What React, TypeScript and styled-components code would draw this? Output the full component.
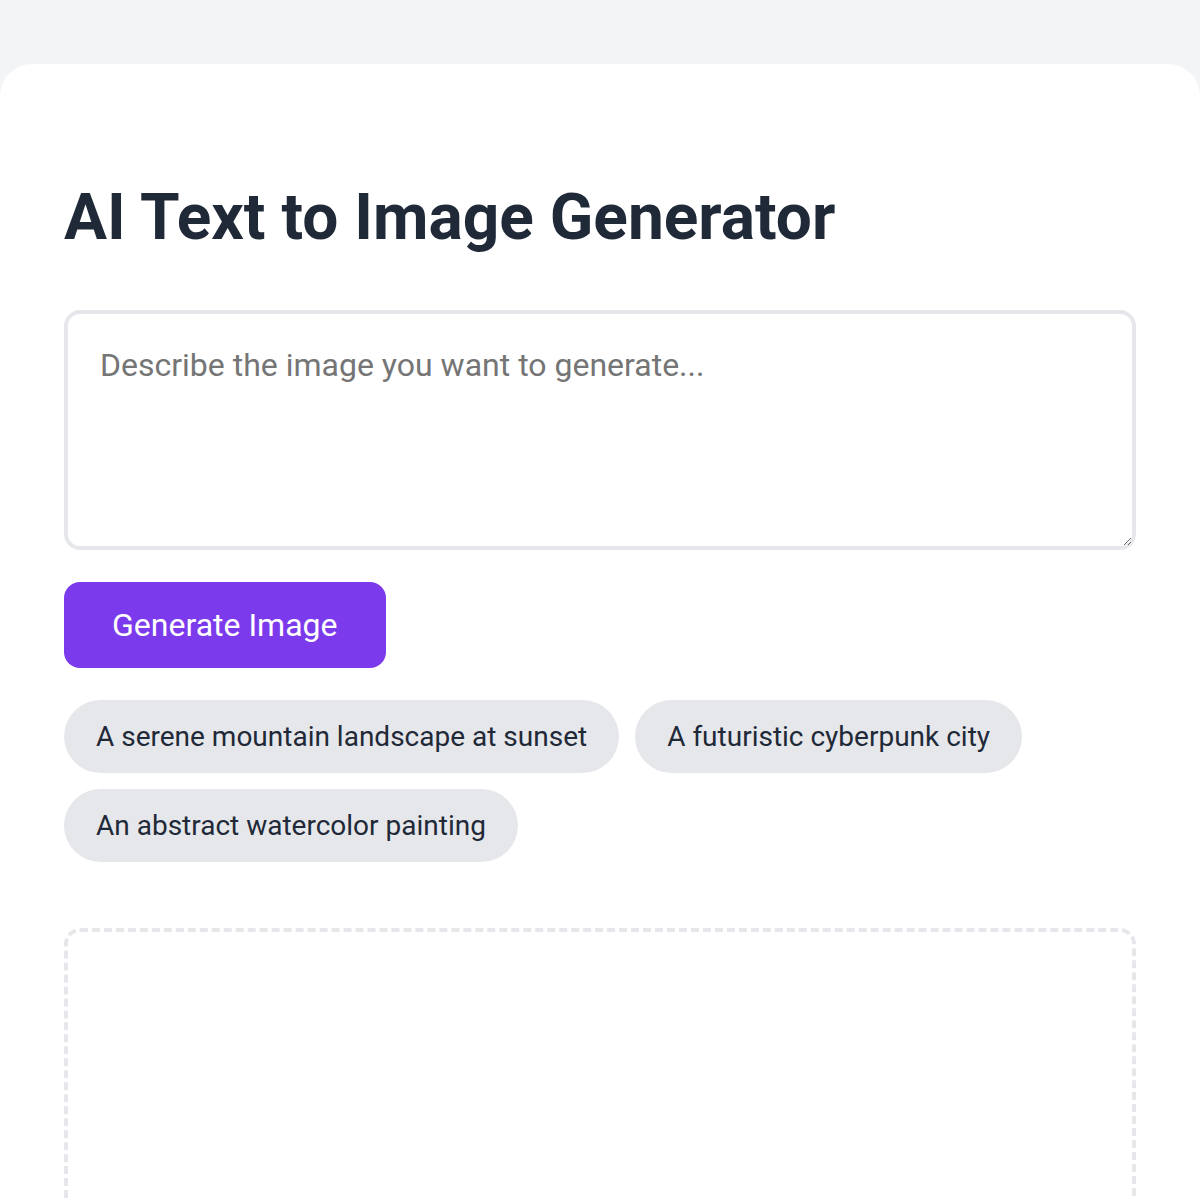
import styled, { createGlobalStyle } from "styled-components"

const GlobalStyle = createGlobalStyle`
    html, body {
        margin: 0;
        padding: 0;
        background: #f3f4f6;
        font-family: Roboto, "Liberation Sans", sans-serif;
    }
`

const Page = styled.div`
    padding-top: 64px;
`

const Card = styled.div`
    background: #fff;
    border-radius: 32px;
    padding: 116px 64px 64px;
    min-height: 1200px;
    box-sizing: border-box;
`

const Title = styled.h1`
    margin: 0 0 55px;
    font-size: 64px;
    font-weight: 700;
    line-height: 75px;
    color: #1f2937;
`

const Prompt = styled.textarea`
    display: block;
    width: 100%;
    height: 240px;
    box-sizing: border-box;
    padding: 32px;
    border: 4px solid #e5e7eb;
    border-radius: 16px;
    font: 400 32px Roboto, "Liberation Sans", sans-serif;
    color: #1f2937;
    resize: vertical;
    outline: none;

    &::placeholder {
        color: #757575;
    }
`

const GenerateButton = styled.button`
    margin-top: 32px;
    padding: 24px 48px;
    border: none;
    border-radius: 16px;
    background: #7c3aed;
    color: #fff;
    font: 400 32px Roboto, "Liberation Sans", sans-serif;
    line-height: 38px;
    cursor: pointer;
`

const Suggestions = styled.div`
    display: flex;
    flex-wrap: wrap;
    gap: 16px;
    margin-top: 32px;
`

const Chip = styled.button`
    padding: 20px 32px;
    border: none;
    border-radius: 999px;
    background: #e5e7eb;
    color: #1f2937;
    font: 400 28px Roboto, "Liberation Sans", sans-serif;
    line-height: 33px;
    cursor: pointer;
`

const Preview = styled.div`
    margin-top: 66px;
    height: 420px;
    border: 4px dashed #e5e7eb;
    border-radius: 16px;
`

const examples = [
    "A serene mountain landscape at sunset",
    "A futuristic cyberpunk city",
    "An abstract watercolor painting",
]

export default function App() {
    return (
        <Page>
            <GlobalStyle />
            <Card>
                <Title>AI Text to Image Generator</Title>
                <Prompt placeholder="Describe the image you want to generate..." />
                <GenerateButton>Generate Image</GenerateButton>
                <Suggestions>
                    {examples.map((e) => (
                        <Chip key={e}>{e}</Chip>
                    ))}
                </Suggestions>
                <Preview />
            </Card>
        </Page>
    )
}
